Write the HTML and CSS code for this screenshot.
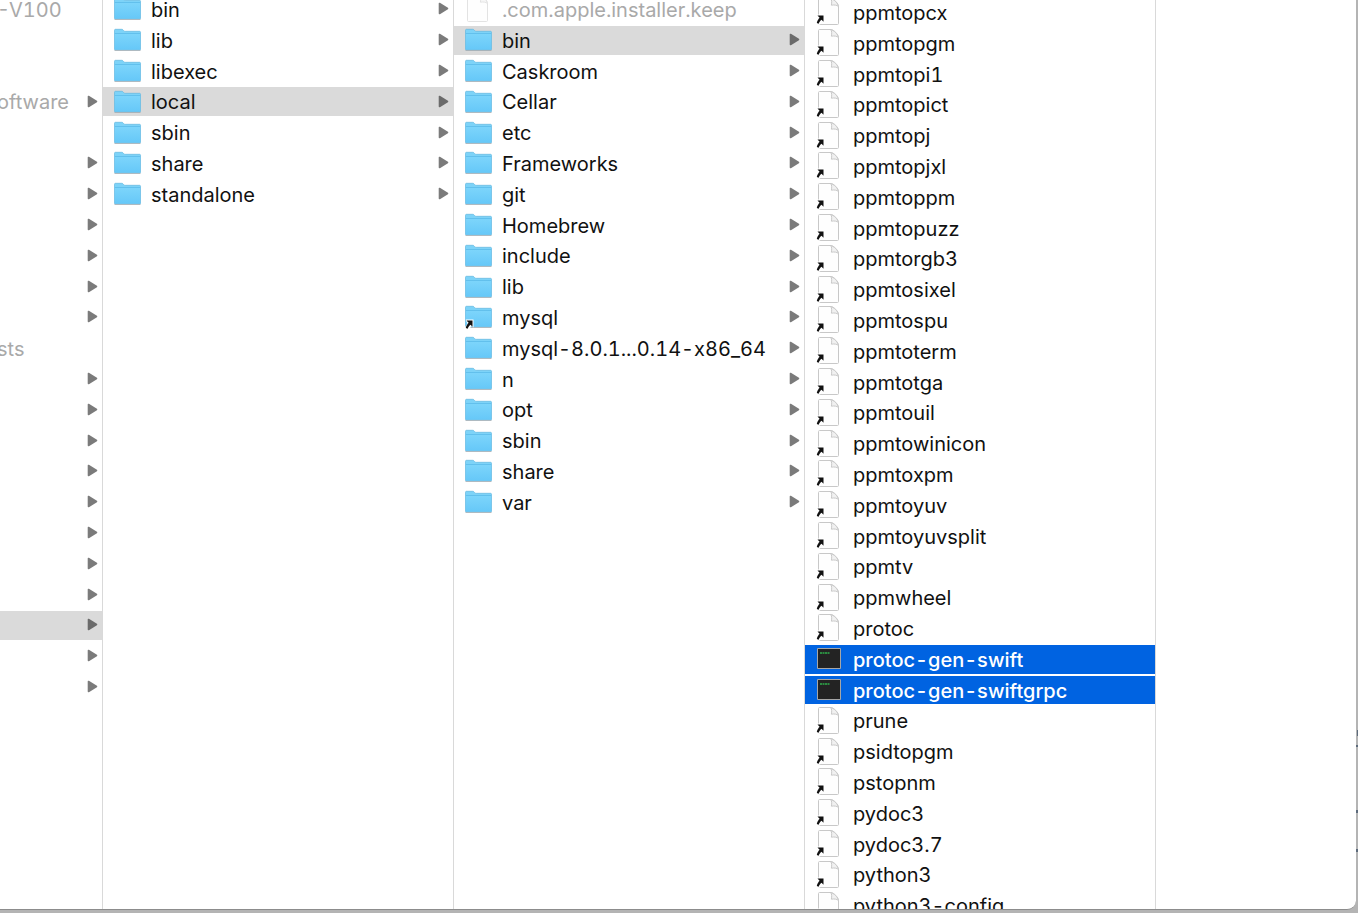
FILE: index.html
```
<!DOCTYPE html>
<html lang="en">
<head>
    <meta charset="UTF-8">
    <meta name="viewport" content="width=device-width, initial-scale=1.0">
    <title>bin</title>
    <link rel="stylesheet" href="styles.css">
</head>
<body>
    <svg class="symbols" width="0" height="0" aria-hidden="true">
        <defs>
            <linearGradient id="blue" x1="0" y1="0" x2="0" y2="1">
                <stop offset="0" stop-color="#7dd5fb"/>
                <stop offset="1" stop-color="#66c8f8"/>
            </linearGradient>
        </defs>
        <symbol id="folder" viewBox="0 0 28 28">
            <path d="M.5 24.300h26" stroke="#9aa9b2" stroke-width="1"/>
            <path d="M.5 23.500V4.300c0-.6.4-1 1-1h6.200c.8 0 1.100.3 1.600.9l.6.7c.3.3.7.4 1.200.4h14.400c.6 0 1 .4 1 1v17.200z" fill="#7dd3f8" stroke="#62b6e0" stroke-width=".7"/>
            <path d="M.9 7.500h25.200v16.100H.9z" fill="url(#blue)"/>
            <path d="M.9 7.500h25.200" stroke="#56b8e6" stroke-width=".7"/>
        </symbol>
        <symbol id="page" viewBox="0 0 28 28">
            <path d="M2.500 1.500c0-.6.4-1 1-1h11.500c2.500 0 7.500 5 7.500 8v17c0 .6-.4 1-1 1h-18c-.6 0-1-.4-1-1z" fill="#fefefe" stroke="#c8c8c8" stroke-width="1"/>
            <path d="M14.500.6c1.500 1.200 1.300 3.800.9 6.600 2.800-.4 5.600-.3 7 1.400-.4-3.500-4.400-7.400-7.900-8z" fill="#f1f1f1" stroke="#c3c3c3" stroke-width=".9"/>
        </symbol>
        <symbol id="badge" viewBox="0 0 28 28">
            <path d="M.7 16.500h7.800v8l-2-1.500-2.500 3.500-3.500.3-.5-2.500 2.500-3.500z" fill="#fff"/>
            <path d="M1.500 17.600h6v6.100l-2-2c-1.300 1-2.200 2.200-2.800 4.100l-1.900-.9c.4-2 1.300-3.700 2.800-5.200z" fill="#111"/>
        </symbol>
        <symbol id="terminal" viewBox="0 0 28 28">
            <rect x="1" y="3" width="24" height="21" rx="1" fill="#a6a6a6"/>
            <rect x="2" y="4" width="22" height="19" fill="#232323"/>
            <path d="M4 8h9.500" stroke="#2fae4b" stroke-width="1.600" stroke-dasharray="2 .5"/>
        </symbol>
        <symbol id="arrow" viewBox="0 0 11 13">
            <path d="M1.500 1.500v10l8-5z" fill="currentColor" stroke="currentColor" stroke-width="1.600" stroke-linejoin="round"/>
        </symbol>
    </svg>

    <main class="window">
        <ul class="column root">
            <li class="row dim">-V100</li>
            <li class="row"></li>
            <li class="row"></li>
            <li class="row dim">oftware<svg class="arrow"><use href="#arrow"/></svg></li>
            <li class="row"></li>
            <li class="row"><svg class="arrow"><use href="#arrow"/></svg></li>
            <li class="row"><svg class="arrow"><use href="#arrow"/></svg></li>
            <li class="row"><svg class="arrow"><use href="#arrow"/></svg></li>
            <li class="row"><svg class="arrow"><use href="#arrow"/></svg></li>
            <li class="row"><svg class="arrow"><use href="#arrow"/></svg></li>
            <li class="row"><svg class="arrow"><use href="#arrow"/></svg></li>
            <li class="row dim">sts</li>
            <li class="row"><svg class="arrow"><use href="#arrow"/></svg></li>
            <li class="row"><svg class="arrow"><use href="#arrow"/></svg></li>
            <li class="row"><svg class="arrow"><use href="#arrow"/></svg></li>
            <li class="row"><svg class="arrow"><use href="#arrow"/></svg></li>
            <li class="row"><svg class="arrow"><use href="#arrow"/></svg></li>
            <li class="row"><svg class="arrow"><use href="#arrow"/></svg></li>
            <li class="row"><svg class="arrow"><use href="#arrow"/></svg></li>
            <li class="row"><svg class="arrow"><use href="#arrow"/></svg></li>
            <li class="row open"><svg class="arrow"><use href="#arrow"/></svg></li>
            <li class="row"><svg class="arrow"><use href="#arrow"/></svg></li>
            <li class="row"><svg class="arrow"><use href="#arrow"/></svg></li>
        </ul>

        <ul class="column">
            <li class="row"><svg class="icon"><use href="#folder"/></svg>bin<svg class="arrow"><use href="#arrow"/></svg></li>
            <li class="row"><svg class="icon"><use href="#folder"/></svg>lib<svg class="arrow"><use href="#arrow"/></svg></li>
            <li class="row"><svg class="icon"><use href="#folder"/></svg>libexec<svg class="arrow"><use href="#arrow"/></svg></li>
            <li class="row open"><svg class="icon"><use href="#folder"/></svg>local<svg class="arrow"><use href="#arrow"/></svg></li>
            <li class="row"><svg class="icon"><use href="#folder"/></svg>sbin<svg class="arrow"><use href="#arrow"/></svg></li>
            <li class="row"><svg class="icon"><use href="#folder"/></svg>share<svg class="arrow"><use href="#arrow"/></svg></li>
            <li class="row"><svg class="icon"><use href="#folder"/></svg>standalone<svg class="arrow"><use href="#arrow"/></svg></li>
        </ul>

        <ul class="column">
            <li class="row dim"><svg class="icon"><use href="#page"/></svg>.com.apple.installer.keep</li>
            <li class="row open"><svg class="icon"><use href="#folder"/></svg>bin<svg class="arrow"><use href="#arrow"/></svg></li>
            <li class="row"><svg class="icon"><use href="#folder"/></svg>Caskroom<svg class="arrow"><use href="#arrow"/></svg></li>
            <li class="row"><svg class="icon"><use href="#folder"/></svg>Cellar<svg class="arrow"><use href="#arrow"/></svg></li>
            <li class="row"><svg class="icon"><use href="#folder"/></svg>etc<svg class="arrow"><use href="#arrow"/></svg></li>
            <li class="row"><svg class="icon"><use href="#folder"/></svg>Frameworks<svg class="arrow"><use href="#arrow"/></svg></li>
            <li class="row"><svg class="icon"><use href="#folder"/></svg>git<svg class="arrow"><use href="#arrow"/></svg></li>
            <li class="row"><svg class="icon"><use href="#folder"/></svg>Homebrew<svg class="arrow"><use href="#arrow"/></svg></li>
            <li class="row"><svg class="icon"><use href="#folder"/></svg>include<svg class="arrow"><use href="#arrow"/></svg></li>
            <li class="row"><svg class="icon"><use href="#folder"/></svg>lib<svg class="arrow"><use href="#arrow"/></svg></li>
            <li class="row"><svg class="icon"><use href="#folder"/><use href="#badge"/></svg>mysql<svg class="arrow"><use href="#arrow"/></svg></li>
            <li class="row"><svg class="icon"><use href="#folder"/></svg>mysql-8.0.1...0.14-x86_64<svg class="arrow"><use href="#arrow"/></svg></li>
            <li class="row"><svg class="icon"><use href="#folder"/></svg>n<svg class="arrow"><use href="#arrow"/></svg></li>
            <li class="row"><svg class="icon"><use href="#folder"/></svg>opt<svg class="arrow"><use href="#arrow"/></svg></li>
            <li class="row"><svg class="icon"><use href="#folder"/></svg>sbin<svg class="arrow"><use href="#arrow"/></svg></li>
            <li class="row"><svg class="icon"><use href="#folder"/></svg>share<svg class="arrow"><use href="#arrow"/></svg></li>
            <li class="row"><svg class="icon"><use href="#folder"/></svg>var<svg class="arrow"><use href="#arrow"/></svg></li>
        </ul>

        <ul class="column files">
            <li class="row"><svg class="icon"><use href="#page"/><use href="#badge"/></svg>ppmtopcx</li>
            <li class="row"><svg class="icon"><use href="#page"/><use href="#badge"/></svg>ppmtopgm</li>
            <li class="row"><svg class="icon"><use href="#page"/><use href="#badge"/></svg>ppmtopi1</li>
            <li class="row"><svg class="icon"><use href="#page"/><use href="#badge"/></svg>ppmtopict</li>
            <li class="row"><svg class="icon"><use href="#page"/><use href="#badge"/></svg>ppmtopj</li>
            <li class="row"><svg class="icon"><use href="#page"/><use href="#badge"/></svg>ppmtopjxl</li>
            <li class="row"><svg class="icon"><use href="#page"/><use href="#badge"/></svg>ppmtoppm</li>
            <li class="row"><svg class="icon"><use href="#page"/><use href="#badge"/></svg>ppmtopuzz</li>
            <li class="row"><svg class="icon"><use href="#page"/><use href="#badge"/></svg>ppmtorgb3</li>
            <li class="row"><svg class="icon"><use href="#page"/><use href="#badge"/></svg>ppmtosixel</li>
            <li class="row"><svg class="icon"><use href="#page"/><use href="#badge"/></svg>ppmtospu</li>
            <li class="row"><svg class="icon"><use href="#page"/><use href="#badge"/></svg>ppmtoterm</li>
            <li class="row"><svg class="icon"><use href="#page"/><use href="#badge"/></svg>ppmtotga</li>
            <li class="row"><svg class="icon"><use href="#page"/><use href="#badge"/></svg>ppmtouil</li>
            <li class="row"><svg class="icon"><use href="#page"/><use href="#badge"/></svg>ppmtowinicon</li>
            <li class="row"><svg class="icon"><use href="#page"/><use href="#badge"/></svg>ppmtoxpm</li>
            <li class="row"><svg class="icon"><use href="#page"/><use href="#badge"/></svg>ppmtoyuv</li>
            <li class="row"><svg class="icon"><use href="#page"/><use href="#badge"/></svg>ppmtoyuvsplit</li>
            <li class="row"><svg class="icon"><use href="#page"/><use href="#badge"/></svg>ppmtv</li>
            <li class="row"><svg class="icon"><use href="#page"/><use href="#badge"/></svg>ppmwheel</li>
            <li class="row"><svg class="icon"><use href="#page"/><use href="#badge"/></svg>protoc</li>
            <li class="row selected"><svg class="icon"><use href="#terminal"/></svg>protoc-gen-swift</li>
            <li class="row selected"><svg class="icon"><use href="#terminal"/></svg>protoc-gen-swiftgrpc</li>
            <li class="row"><svg class="icon"><use href="#page"/><use href="#badge"/></svg>prune</li>
            <li class="row"><svg class="icon"><use href="#page"/><use href="#badge"/></svg>psidtopgm</li>
            <li class="row"><svg class="icon"><use href="#page"/><use href="#badge"/></svg>pstopnm</li>
            <li class="row"><svg class="icon"><use href="#page"/><use href="#badge"/></svg>pydoc3</li>
            <li class="row"><svg class="icon"><use href="#page"/><use href="#badge"/></svg>pydoc3.7</li>
            <li class="row"><svg class="icon"><use href="#page"/><use href="#badge"/></svg>python3</li>
            <li class="row"><svg class="icon"><use href="#page"/><use href="#badge"/></svg>python3-config</li>
        </ul>
    </main>
</body>
</html>
```
FILE: styles.css
```
* {
    box-sizing: border-box;
}
body {
    margin: 0;
    height: 100vh;
    padding: 0 2px 3px 0;
    overflow: hidden;
    /* bits of the window behind show at the right edge */
    background:
        linear-gradient(#5d6b7c, #5d6b7c) right 730px / 1px 6px no-repeat,
        linear-gradient(#5d6b7c, #5d6b7c) right 745px / 2px 2px no-repeat,
        linear-gradient(#5d6b7c, #5d6b7c) right 810px / 2px 3px no-repeat,
        linear-gradient(#5d6b7c, #5d6b7c) right 849px / 2px 3px no-repeat,
        #b4b4b4;
    font-family: Inter, "Liberation Sans", sans-serif;
    font-size: 20px;
    font-variant-numeric: tabular-nums;
    line-height: 1.54;
    color: #111;
}
.symbols {
    position: absolute;
}
.window {
    display: flex;
    height: 100%;
    overflow: hidden;
    background: #fff;
    border-bottom: 1px solid #8c8c8c;
    border-bottom-right-radius: 9px;
}
.column {
    flex: 0 0 351px;
    margin: 0;
    padding: 0;
    list-style: none;
    border-right: 1px solid #d9d9d9;
}
.column .row:first-child {
    margin-top: -6px;
}
.files .row:first-child {
    margin-top: -3px;
}
.root {
    flex-basis: 103px;
    text-indent: -3px;
}
.row {
    display: flex;
    align-items: center;
    height: 1.54em;
    padding: 2px 4px 0 11px;
    border: solid transparent;
    border-width: 1px 0;
    background-clip: padding-box;
    white-space: nowrap;
}
.root .row {
    padding-left: 0;
}
.icon {
    flex: none;
    width: 28px;
    height: 28px;
    margin: 0 9px 2px 0;
}
.arrow {
    flex: none;
    width: 11px;
    height: 13px;
    margin: 0 0 3px auto;
    color: #7b7b7b;
}
.dim {
    color: #a9a9a9;
}
.dim .icon {
    opacity: 0.5;
}
.open {
    background-color: #dadada;
}
.open .arrow {
    color: #6b6b6b;
}
.selected {
    background-color: #0063e1;
    color: #fff;
    font-weight: 500;
}
```
